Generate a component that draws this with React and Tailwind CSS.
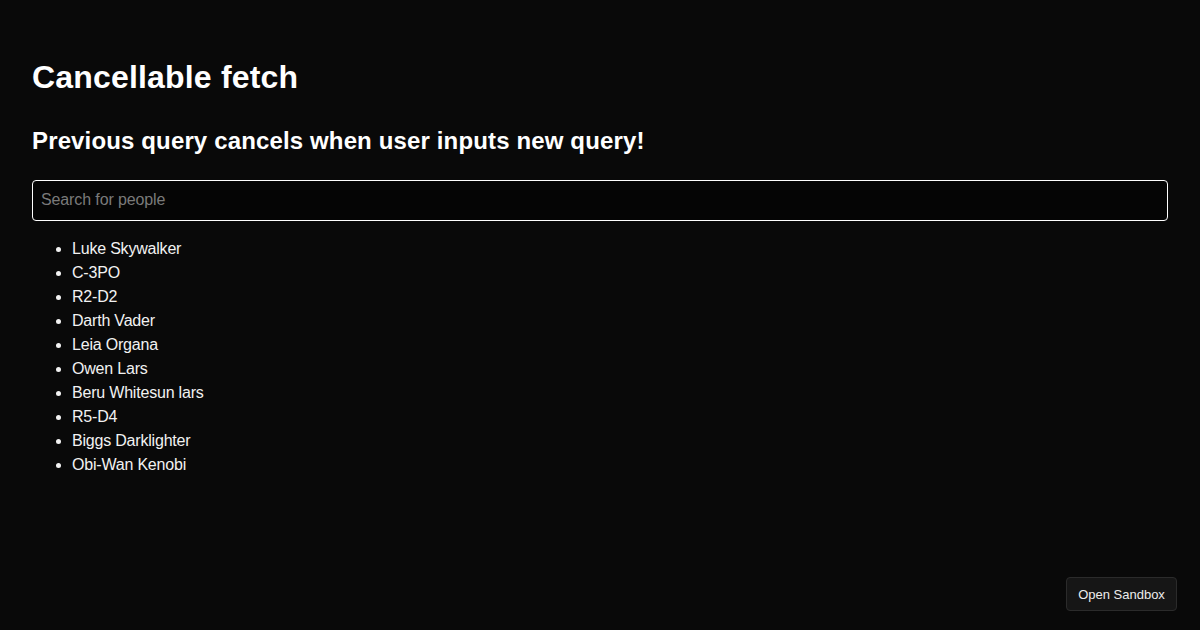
export default function App() {
  const people = [
    "Luke Skywalker",
    "C-3PO",
    "R2-D2",
    "Darth Vader",
    "Leia Organa",
    "Owen Lars",
    "Beru Whitesun lars",
    "R5-D4",
    "Biggs Darklighter",
    "Obi-Wan Kenobi",
  ];
  return (
    <div
      className="relative min-h-[630px] w-full bg-[#090909] px-8 pt-[59px] text-white"
      style={{ fontFamily: '"Liberation Sans", Arial, sans-serif' }}
    >
      <h1 className="text-[32px] font-bold leading-[37px] tracking-[0.18px]">Cancellable fetch</h1>
      <h2 className="mt-[31px] text-[24px] font-bold leading-[28px] tracking-[0.14px]">
        Previous query cancels when user inputs new query!
      </h2>
      <input
        className="mt-[25px] block h-[41px] w-full rounded-[4px] border border-white bg-[#050505] px-2 pb-[2px] text-[16px] tracking-[-0.12px] text-white placeholder:text-[#7a7a7a] outline-none"
        placeholder="Search for people"
      />
      <ul className="mt-4 list-disc pl-10 text-[16px] leading-6 tracking-[-0.2px] text-[#f2f2f2]">
        {people.map((p) => (
          <li key={p}>{p}</li>
        ))}
      </ul>
      <button className="absolute bottom-[19px] right-[23px] h-[34px] w-[111px] rounded-[4px] border border-[#2b2b2b] bg-[#161616] pt-[1px] text-[13px] text-[#ececec]">
        Open Sandbox
      </button>
    </div>
  );
}
